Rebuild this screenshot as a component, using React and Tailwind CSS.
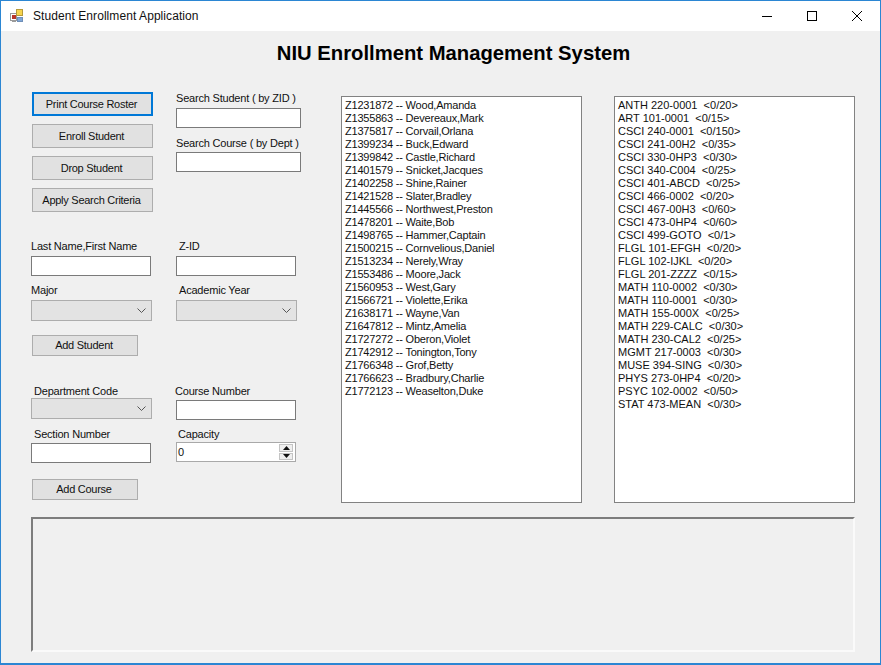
const students = [
  "Z1231872 -- Wood,Amanda",
  "Z1355863 -- Devereaux,Mark",
  "Z1375817 -- Corvail,Orlana",
  "Z1399234 -- Buck,Edward",
  "Z1399842 -- Castle,Richard",
  "Z1401579 -- Snicket,Jacques",
  "Z1402258 -- Shine,Rainer",
  "Z1421528 -- Slater,Bradley",
  "Z1445566 -- Northwest,Preston",
  "Z1478201 -- Waite,Bob",
  "Z1498765 -- Hammer,Captain",
  "Z1500215 -- Cornvelious,Daniel",
  "Z1513234 -- Nerely,Wray",
  "Z1553486 -- Moore,Jack",
  "Z1560953 -- West,Gary",
  "Z1566721 -- Violette,Erika",
  "Z1638171 -- Wayne,Van",
  "Z1647812 -- Mintz,Amelia",
  "Z1727272 -- Oberon,Violet",
  "Z1742912 -- Tonington,Tony",
  "Z1766348 -- Grof,Betty",
  "Z1766623 -- Bradbury,Charlie",
  "Z1772123 -- Weaselton,Duke",
]

const courses = [
  "ANTH 220-0001  <0/20>",
  "ART 101-0001  <0/15>",
  "CSCI 240-0001  <0/150>",
  "CSCI 241-00H2  <0/35>",
  "CSCI 330-0HP3  <0/30>",
  "CSCI 340-C004  <0/25>",
  "CSCI 401-ABCD  <0/25>",
  "CSCI 466-0002  <0/20>",
  "CSCI 467-00H3  <0/60>",
  "CSCI 473-0HP4  <0/60>",
  "CSCI 499-GOTO  <0/1>",
  "FLGL 101-EFGH  <0/20>",
  "FLGL 102-IJKL  <0/20>",
  "FLGL 201-ZZZZ  <0/15>",
  "MATH 110-0002  <0/30>",
  "MATH 110-0001  <0/30>",
  "MATH 155-000X  <0/25>",
  "MATH 229-CALC  <0/30>",
  "MATH 230-CAL2  <0/25>",
  "MGMT 217-0003  <0/30>",
  "MUSE 394-SING  <0/30>",
  "PHYS 273-0HP4  <0/20>",
  "PSYC 102-0002  <0/50>",
  "STAT 473-MEAN  <0/30>",
]

function Label({ className, children }) {
  return <div className={"h-4 leading-4 whitespace-nowrap " + className}>{children}</div>
}

function Btn({ className, children }) {
  return (
    <button className={"flex items-center justify-center bg-[#e1e1e1] whitespace-nowrap pr-[2px] tracking-[-0.27px] " + className}>
      {children}
    </button>
  )
}

function Input({ className }) {
  return <input className={"block h-5 bg-white border border-[#7a7a7a] outline-none " + className} />
}

function Combo({ className }) {
  return (
    <div className={"flex items-center justify-end h-[21px] w-[121px] bg-[#e3e3e3] border border-[#adadad] pr-[5px] " + className}>
      <svg width="9" height="6" viewBox="0 0 9 6" fill="none" stroke="#555" strokeWidth="1">
        <path d="M0.5 0.5L4.5 4.5L8.5 0.5" />
      </svg>
    </div>
  )
}

function ListBox({ items, className }) {
  return (
    <div className={"w-[241px] h-[407px] bg-white border border-[#828282] pl-[3px] pt-[2px] " + className}>
      {items.map((t) => (
        <div key={t} className="h-[13px] leading-[13px] whitespace-pre">{t}</div>
      ))}
    </div>
  )
}

export default function App() {
  return (
    <div className="w-[881px] h-[665px] bg-[#f0f0f0] border border-b-2 border-[#2b86d3] text-[11px] tracking-[-0.2px] text-[#111] font-['Liberation_Sans',sans-serif] overflow-hidden">
      {/* title bar */}
      <div className="flex items-center h-[30px] bg-white">
        <svg className="ml-[8px]" width="16" height="16" viewBox="0 0 16 16">
          <rect x="1.5" y="5.5" width="6" height="7" fill="#fff" stroke="#9a9a9a" />
          <rect x="3" y="7" width="4" height="4" fill="#b8352b" />
          <rect x="7.5" y="1.5" width="6" height="6" fill="#f6d44e" stroke="#b59a3a" />
          <rect x="8.5" y="9.5" width="5" height="4" fill="#7fa7d8" stroke="#6f8fb8" />
          <rect x="3" y="13" width="4" height="1" fill="#9a9a9a" />
        </svg>
        <div className="ml-[8px] text-[12px] tracking-[0.07px]">Student Enrollment Application</div>
        <div className="flex ml-auto mr-px">
          <div className="flex items-center justify-center w-[45px] h-[30px]">
            <svg width="10" height="10" viewBox="0 0 10 10" stroke="#000" fill="none"><path d="M0 5.5H10" /></svg>
          </div>
          <div className="flex items-center justify-center w-[45px] h-[30px]">
            <svg width="10" height="10" viewBox="0 0 10 10" stroke="#000" fill="none"><rect x="0.5" y="0.5" width="9" height="9" /></svg>
          </div>
          <div className="flex items-center justify-center w-[45px] h-[30px]">
            <svg width="10" height="10" viewBox="0 0 10 10" stroke="#000" fill="none"><path d="M0 0L10 10M10 0L0 10" /></svg>
          </div>
        </div>
      </div>

      <h1 className="h-[61px] pt-[10px] pl-[26px] text-center text-[20.25px] tracking-normal leading-6 font-bold text-black">
        NIU Enrollment Management System
      </h1>

      <div className="flex items-start pl-[30px] h-[412px]">
        {/* left forms */}
        <div className="w-[310px]">
          <div className="flex h-[146px]">
            <div className="w-[145px] flex flex-col gap-2 pl-px">
              <Btn className="w-[121px] h-6 border-2 border-[#0078d7]">Print Course Roster</Btn>
              <Btn className="w-[121px] h-6 border border-[#adadad]">Enroll Student</Btn>
              <Btn className="w-[121px] h-6 border border-[#adadad]">Drop Student</Btn>
              <Btn className="w-[121px] h-6 border border-[#adadad]">Apply Search Criteria</Btn>
            </div>
            <div className="flex flex-col">
              <Label className="mt-[-2px]">Search Student ( by ZID )</Label>
              <Input className="w-[125px] mt-[2px]" />
              <Label className="mt-[7px]">Search Course ( by Dept )</Label>
              <Input className="w-[125px] mt-px" />
            </div>
          </div>

          <div className="flex">
            <div className="w-[145px] flex flex-col">
              <Label className="">Last Name,First Name</Label>
              <Input className="w-[120px] mt-[2px]" />
              <Label className="mt-[6px]">Major</Label>
              <Combo className="mt-[2px]" />
              <Btn className="w-[106px] h-[21px] ml-px mt-[14px] border border-[#adadad]">Add Student</Btn>
              <Label className="ml-[3px] mt-[27px]">Department Code</Label>
              <Combo className="mt-[-1px]" />
              <Label className="ml-[3px] mt-[7px]">Section Number</Label>
              <Input className="w-[120px] mt-px" />
              <Btn className="w-[106px] h-[21px] ml-px mt-[16px] border border-[#adadad]">Add Course</Btn>
            </div>
            <div className="flex flex-col">
              <Label className="ml-[3px]">Z-ID</Label>
              <Input className="w-[120px] mt-[2px]" />
              <Label className="ml-[3px] mt-[6px]">Academic Year</Label>
              <Combo className="mt-[2px]" />
              <Label className="ml-[-1px] mt-[62px]">Course Number</Label>
              <Input className="w-[120px] mt-px" />
              <Label className="ml-[2px] mt-[6px]">Capacity</Label>
              <div className="flex items-center justify-between w-[120px] h-5 bg-white border border-[#a9a9a9] pl-[1px] pr-px">
                <span>0</span>
                <div className="flex flex-col gap-px w-[14px] h-4 mr-px">
                  <div className="flex flex-1 items-center justify-center bg-[#efefef] border border-[#c4c4c4]">
                    <svg width="7" height="4" viewBox="0 0 7 4" fill="#111"><path d="M3.5 0L7 4H0Z" /></svg>
                  </div>
                  <div className="flex flex-1 items-center justify-center bg-[#efefef] border border-[#c4c4c4]">
                    <svg width="7" height="4" viewBox="0 0 7 4" fill="#111"><path d="M0 0H7L3.5 4Z" /></svg>
                  </div>
                </div>
              </div>
            </div>
          </div>
        </div>

        {/* lists */}
        <ListBox items={students} className="mt-[4px]" />
        <ListBox items={courses} className="ml-[32px] mt-[4px] tracking-normal" />
      </div>

      <div className="ml-[30px] mt-[13px] w-[824px] h-[135px] border-t-2 border-l-2 border-t-[#7d7d7d] border-l-[#7d7d7d] border-r-2 border-b-2 border-r-[#fafafa] border-b-[#fafafa]" />
    </div>
  )
}
